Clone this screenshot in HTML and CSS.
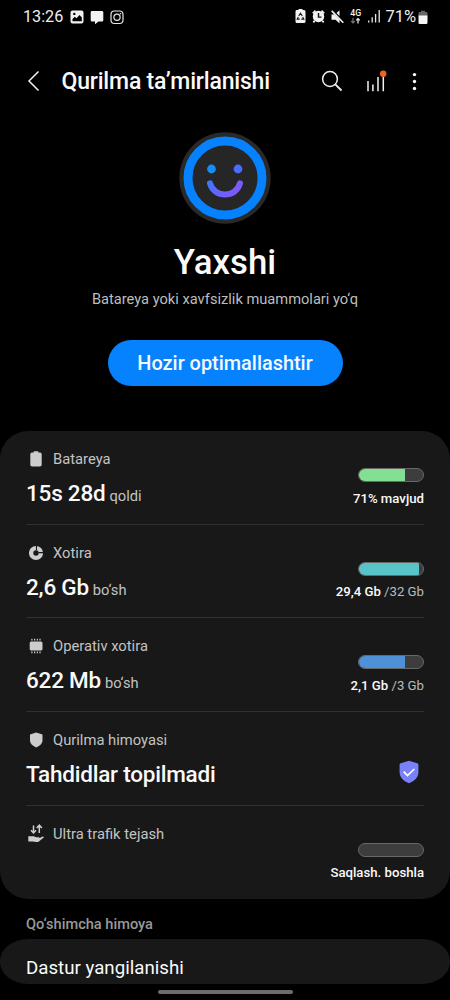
FILE: index.html
```html
<!DOCTYPE html>
<html lang="uz">
<head>
<meta charset="utf-8">
<title>Qurilma ta’mirlanishi</title>
<link rel="stylesheet" href="styles.css">
</head>
<body>
<div class="screen">
  <div class="statusbar">
    <span class="clock">13:26</span>
    <svg class="status-left" width="56" height="16" viewBox="0 0 56 16">
      <path fill="#f2f2f2" fill-rule="evenodd" d="M2.500 1.500h9a2 2 0 0 1 2 2v9a2 2 0 0 1-2 2h-9a2 2 0 0 1-2-2v-9a2 2 0 0 1 2-2zM2.500 12.300h9.300V8.600L9.500 6 6.500 9.300 4.800 7.800 2.500 10zM4.300 3.700a1.200 1.200 0 1 0 0 2.400 1.200 1.200 0 0 0 0-2.400z"/>
      <path fill="#f2f2f2" d="M22 2h10a1.300 1.300 0 0 1 1.300 1.300v8A1.300 1.300 0 0 1 32 12.500h-3.500L25 15.200v-2.700h-3a1.300 1.300 0 0 1-1.300-1.200v-8A1.300 1.300 0 0 1 22 2z"/>
      <g fill="none" stroke="#e6e6e6" stroke-width="1.200"><rect x="41" y="2" width="12" height="12.500" rx="3.500"/><circle cx="47" cy="8.200" r="3.100"/></g><circle cx="50.500" cy="4.700" r=".8" fill="#e6e6e6"/>
    </svg>
    <svg class="status-right" width="88" height="18" viewBox="0 0 88 18">
      <path fill="#f2f2f2" d="M4 2h2V1h4v1h1.500A1.500 1.500 0 0 1 13 3.500v10a1.500 1.500 0 0 1-1.500 1.500h-7A1.500 1.500 0 0 1 3 13.500v-10A1.500 1.500 0 0 1 4 2z" transform="translate(-2.500)"/>
      <g transform="translate(5.500 8.800)" fill="none" stroke="#111" stroke-width="1.100"><path d="M-1.800-.8 0-3.500 1.800-.8M2.200.2 3.300 2.300H.8M-2.200.2l-1.100 2.100h2.500"/></g>
      <g transform="translate(23.500 8.500)"><circle r="5.700" fill="#f2f2f2"/><path d="M-5.700-3.200l2.700-2.600M5.700-3.200 3-5.800M-3.800 4.200l-1.400 1.700M3.800 4.200l1.400 1.700" stroke="#f2f2f2" stroke-width="1.800"/><path d="M0-3.500V.6h3" fill="none" stroke="#111" stroke-width="1.400"/></g>
      <g transform="translate(36 2)"><path fill="#f2f2f2" d="M.5 4.500h2.700l5.300 5.300v3.700L4.600 9.700H.5zM5.500 3 8.500.3v5.800z"/><path d="M.7.900 12.300 12.800" stroke="#f2f2f2" stroke-width="1.600"/></g>
      <g transform="translate(56 9.500)" fill="none" stroke-width="1.200"><path stroke="#777" d="M2 .5v5M.2 3.600 2 5.400l1.800-1.800"/><path stroke="#f2f2f2" d="M7 6V1M5.200 2.900 7 1.100l1.800 1.800"/></g>
      <path stroke="#e8e8e8" stroke-width="1.300" d="M73.700 14.500v-2M77.200 14.500V9.200M80.600 14.500V6M84.200 14.500V2"/>
      <text x="55.300" y="7.800" class="net">4G</text>
    </svg>
    <span class="percent">71%</span>
    <svg class="batt" width="10" height="15" viewBox="0 0 10 15"><path fill="#666" d="M1.500 2h1.500V.7h4V2h1.500A1.300 1.300 0 0 1 9.500 3.300V6h-9V3.300A1.300 1.300 0 0 1 1.500 2z"/><path fill="#f5f5f5" d="M.5 5.500h9v7.300a1.300 1.300 0 0 1-1.300 1.300H1.800A1.300 1.300 0 0 1 .5 12.800z"/></svg>
  </div>

  <header class="appbar">
    <svg class="back" width="14" height="24" viewBox="0 0 14 24"><path d="M11.500 2.500 2 12l9.500 9.500" fill="none" stroke="#f2f2f2" stroke-width="1.500"/></svg>
    <h1 class="title">Qurilma ta’mirlanishi</h1>
    <svg class="tools" width="104" height="28" viewBox="0 0 104 28">
      <g fill="none" stroke="#f2f2f2" stroke-width="1.500"><circle cx="10" cy="12" r="7.400"/><path d="m15.300 17.300 6.200 6.200" stroke-width="1.800"/><path d="M48 24.300V14M52.900 24.300v-6.800M58 24.300V10M63.300 24.300V9"/></g>
      <circle cx="63.200" cy="6.800" r="3.200" fill="#ee6420"/>
      <g fill="#fafafa"><circle cx="94.500" cy="7.600" r="1.700"/><circle cx="94.500" cy="14.500" r="1.700"/><circle cx="94.500" cy="21.500" r="1.700"/></g>
    </svg>
  </header>

  <section class="summary">
    <svg class="face" width="92" height="92" viewBox="0 0 92 92">
      <defs><linearGradient id="smile" gradientUnits="userSpaceOnUse" x1="27" y1="36" x2="63" y2="66"><stop offset="0" stop-color="#188cff"/><stop offset=".5" stop-color="#6464fa"/><stop offset="1" stop-color="#8c52ff"/></linearGradient></defs>
      <circle cx="46" cy="46" r="45.700" fill="#292929"/>
      <circle cx="46" cy="46" r="37" fill="#262626" stroke="#0682ff" stroke-width="9"/>
      <circle cx="32.500" cy="37" r="4.400" fill="#168cf5"/><circle cx="59" cy="37" r="4.400" fill="#4c6cff"/>
      <path d="M31 51.300C35 66.200 57 66.200 61 51.300" fill="none" stroke="url(#smile)" stroke-width="6" stroke-linecap="round"/>
    </svg>
    <h2 class="state">Yaxshi</h2>
    <p class="detail">Batareya yoki xavfsizlik muammolari yo‘q</p>
    <button class="optimize">Hozir optimallashtir</button>
  </section>

  <main class="card">
    <section class="row">
      <div class="info">
        <div class="label"><svg class="icon" width="20" height="20" viewBox="0 0 20 20"><path fill="#cdcdcd" d="M6 3.500h1.700V2.300h4.600v1.200H14A1.700 1.700 0 0 1 15.700 5.200v10.600a1.700 1.700 0 0 1-1.700 1.700H6a1.700 1.700 0 0 1-1.700-1.700V5.200A1.700 1.700 0 0 1 6 3.500z"/></svg><span>Batareya</span></div>
        <div class="value"><b>15s 28d</b><span>qoldi</span></div>
      </div>
      <div class="usage"><div class="meter"><div class="fill green" style="width:72%"></div></div><div class="amount"><b>71% mavjud</b></div></div>
    </section>
    <section class="row">
      <div class="info">
        <div class="label"><svg class="icon" width="20" height="20" viewBox="0 0 20 20"><circle cx="10" cy="10" r="4.900" fill="none" stroke="#cdcdcd" stroke-width="4.400"/><path d="M10.500 2v5.500M12.500 9.600H18" fill="none" stroke="#181818" stroke-width="1.100"/></svg><span>Xotira</span></div>
        <div class="value"><b>2,6 Gb</b><span>bo‘sh</span></div>
      </div>
      <div class="usage"><div class="meter"><div class="fill teal" style="width:93%"></div></div><div class="amount"><b>29,4 Gb</b> /32 Gb</div></div>
    </section>
    <section class="row">
      <div class="info">
        <div class="label"><svg class="icon" width="20" height="20" viewBox="0 0 20 20"><rect x="3.700" y="5.500" width="12.800" height="9" rx="1.500" fill="#cdcdcd"/><path d="M5.300 3.600h9.500M5.300 16.400h9.500" stroke="#cdcdcd" stroke-width="1.600" stroke-dasharray="1.200 1.500"/></svg><span>Operativ xotira</span></div>
        <div class="value"><b>622 Mb</b><span>bo‘sh</span></div>
      </div>
      <div class="usage"><div class="meter"><div class="fill blue" style="width:72%"></div></div><div class="amount"><b>2,1 Gb</b> /3 Gb</div></div>
    </section>
    <section class="row">
      <div class="info">
        <div class="label"><svg class="icon" width="20" height="20" viewBox="0 0 20 20"><path fill="#cdcdcd" d="M10.200 2.400 16.500 4.500v5.800c0 3-2.300 5.600-6.300 7.200C6.200 15.900 4 13.300 4 10.300V4.500z"/></svg><span>Qurilma himoyasi</span></div>
        <div class="value"><b>Tahdidlar topilmadi</b></div>
      </div>
      <svg class="safe" width="20" height="24" viewBox="0 0 20 24"><path fill="#7a80f8" d="M10 .8 18.200 3.300a1.500 1.500 0 0 1 1.200 1.500v7.400c0 4.800-3.400 8.500-9.400 11.100C4 20.700.6 17 .6 12.200V4.800A1.500 1.500 0 0 1 1.800 3.300z"/><path d="m4.700 11.700 3.800 3.800 6.800-6.500" fill="none" stroke="#fff" stroke-width="1.700"/></svg>
    </section>
    <section class="row">
      <div class="info">
        <div class="label"><svg class="icon" width="20" height="20" viewBox="0 0 20 20"><g fill="none" stroke="#cdcdcd" stroke-width="1.500"><path d="M7.500 1.500V9M5 6.300 7.500 9 10 6.300M13.300 9V1M10.700 4 13.300 1.200 15.900 4"/></g><path fill="#cdcdcd" d="M2.300 12.300h5.500l2.400 1h2.600c1 0 1 1.300 0 1.300l3.800-2.100c1-.4 1.600.6.900 1.200L12.500 17.700c-.7.500-1.500.5-2.300.3L6.500 17.500H2.300z"/></svg><span>Ultra trafik tejash</span></div>
      </div>
      <div class="usage"><div class="meter"></div><div class="amount"><b>Saqlash. boshla</b></div></div>
    </section>
  </main>

  <h3 class="group">Qo‘shimcha himoya</h3>
  <div class="update">Dastur yangilanishi</div>
  <div class="homebar"></div>
</div>
</body>
</html>
```
FILE: styles.css
```css
* { box-sizing: border-box; }
body { margin: 0; background: #000; font-family: Roboto, sans-serif; color: #fafafa; }
h1, h2, h3, p { margin: 0; }
b { font-weight: 500; }
svg { display: block; flex: none; }
.screen { width: 450px; height: 1000px; overflow: hidden; display: flex; flex-direction: column; background: #000; }

.statusbar { height: 33px; flex: none; display: flex; align-items: center; padding-left: 23px; white-space: nowrap; }
.clock { width: 47px; font-size: 16.2px; color: #eee; }
.status-right { margin-left: 169px; margin-right: 2.500px; }
.net { font: 500 8.800px Roboto, sans-serif; fill: #f2f2f2; }
.percent { width: 32.500px; font-size: 16.500px; color: #eee; }
.batt { margin-top: 1px; }

.appbar { height: 96px; flex: none; display: flex; align-items: center; padding-left: 27px; }
.title { width: 251px; margin-left: 20.500px; padding-top: 2px; font-size: 23px; letter-spacing: -0.190px; font-weight: 500; line-height: 30px; white-space: nowrap; }
.tools { margin-left: 7.500px; }

.summary { height: 302px; flex: none; display: flex; flex-direction: column; align-items: center; padding-top: 3px; }
.state { margin-top: 16px; font-size: 34.800px; font-weight: 500; line-height: 44px; }
.detail { margin-top: 5px; font-size: 14.650px; line-height: 20px; color: #bdbdbd; white-space: nowrap; }
.optimize { margin-top: 31px; width: 235px; height: 46px; padding: 2px 0 0; border: 0; border-radius: 23px; background: #0682ff; color: #f5faff; font: 500 19.900px/44px Roboto, sans-serif; white-space: nowrap; }

.card { height: 468px; flex: none; padding: 0 26px; border-radius: 28px; background: #181818; }
.row { height: 93.700px; display: flex; justify-content: space-between; border-bottom: 1px solid #303030; }
.row:last-child { border-bottom: 0; }
.info { padding-top: 18px; white-space: nowrap; }
.label { display: flex; align-items: center; gap: 7px; height: 20px; font-size: 14.750px; color: #c3c3c3; }
.value { display: flex; align-items: baseline; gap: 4px; margin-top: 9px; line-height: 30px; }
.value b { font-size: 22.500px; letter-spacing: -0.220px; }
.value span { font-size: 14.700px; color: #c3c3c3; }
.usage { display: flex; flex-direction: column; align-items: flex-end; padding-top: 37px; }
.meter { width: 66px; height: 14px; border: 1px solid #686868; border-radius: 7px; overflow: hidden; background: #3d3d3d; }
.fill { height: 100%; }
.green { background: #83df91; }
.teal { background: #58c4c8; }
.blue { background: #4d91d8; }
.amount { margin-top: 7.500px; font-size: 13.200px; line-height: 18px; color: #bcbcbc; white-space: nowrap; }
.amount b { color: #fafafa; }
.safe { margin: 48px 5.500px 0 0; }

.group { flex: none; margin: 15px 0 0 26px; font-size: 14.600px; font-weight: 500; line-height: 20px; color: #999; }
.update { height: 45px; flex: none; margin: 5px 0 0; padding: 14px 26px 0; border-radius: 28px / 22px; background: #181818; font-size: 18.700px; line-height: 30px; }
.homebar { width: 135px; height: 4px; flex: none; margin: 6px auto 0; border-radius: 2px; background: #6c6c6c; }
```
